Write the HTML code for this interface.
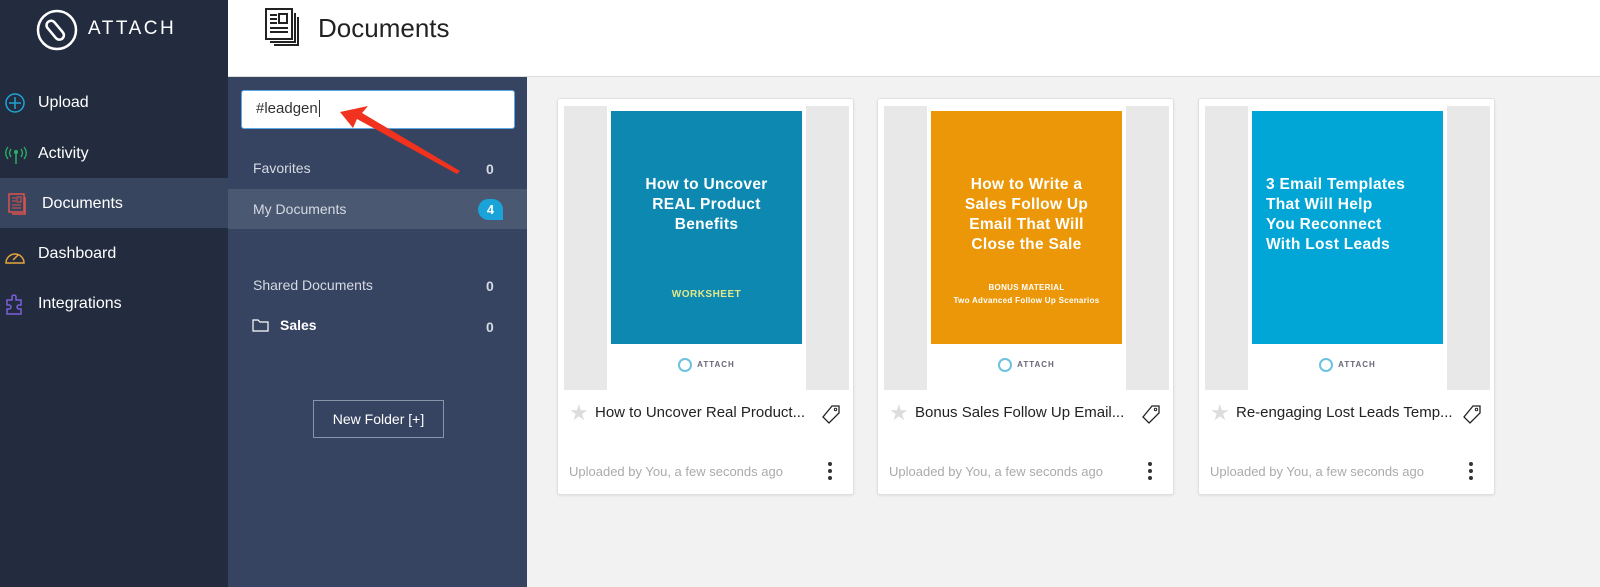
<!DOCTYPE html>
<html><head><meta charset="utf-8"><style>
*{margin:0;padding:0;box-sizing:border-box}
body{width:1600px;height:587px;overflow:hidden;font-family:"Liberation Sans",sans-serif;background:#f2f2f2;position:relative}
.a{position:absolute}
#side{left:0;top:0;width:228px;height:587px;background:#232c3f}
.nav{position:absolute;left:38px;color:#fff;font-size:16px}
#panel{left:228px;top:77px;width:299px;height:510px;background:#364461}
#head{left:228px;top:0;width:1372px;height:77px;background:#fff;border-bottom:1px solid #ddd}
.pl{position:absolute;left:25px;color:#d5dae3;font-size:14px}
.pc{position:absolute;left:258px;color:#d5dae3;font-size:14px;font-weight:bold}
.card{position:absolute;top:98px;width:297px;height:397px;background:#fff;border:1px solid #e0e0e0;border-radius:3px;box-shadow:0 1px 2px rgba(0,0,0,.08)}
.img{position:absolute;left:6px;top:7px;width:285px;height:284px;background:#e8e8e8}
.pg{position:absolute;left:43px;top:0;width:199px;height:284px;background:#fff}
.book{position:absolute;left:4px;top:5px;width:191px;height:233px;color:#fff;font-weight:bold;font-size:15.5px;text-align:center;line-height:20px;letter-spacing:.3px}
.logo{position:absolute;left:0;width:199px;top:252px;text-align:center;font-size:8px;font-weight:bold;color:#667;letter-spacing:1px}
.logo span{display:inline-block;width:14px;height:14px;border:2px solid #6cc2e0;border-radius:50%;vertical-align:middle;margin-right:5px}
.title{position:absolute;left:37px;top:305px;font-size:15px;color:#222}
.star{position:absolute;left:11px;top:301px;font-size:22px;color:#ddd}
.tag{position:absolute;left:262px;top:305px}
.up{position:absolute;left:11px;top:365px;font-size:13px;color:#aaa}
.dots{position:absolute;left:270px;top:363px;width:4px}
.dots i{display:block;width:4px;height:4px;border-radius:50%;background:#333;margin-bottom:3px}
</style></head><body>
<div class="a" id="side">
 <svg class="a" style="left:36px;top:9px" width="42" height="42" viewBox="0 0 42 42"><circle cx="21" cy="21" r="19" fill="none" stroke="#fff" stroke-width="2.5"/><rect x="15" y="9" width="9" height="22" rx="4.5" transform="rotate(-40 21 21)" fill="none" stroke="#fff" stroke-width="2.5"/></svg>
 <div class="a" style="left:88px;top:18px;color:#fff;font-size:19px;letter-spacing:2.5px">ATTACH</div>
 <div class="a" style="left:0;top:178px;width:228px;height:50px;background:#38455f"></div>
 <svg class="a" style="left:5px;top:93px" width="20" height="20"><circle cx="10" cy="10" r="9" fill="none" stroke="#1fa3d4" stroke-width="1.5"/><path d="M10 4v12M4 10h12" stroke="#1fa3d4" stroke-width="1.5"/></svg>
 <div class="nav" style="top:94px">Upload</div>
 <svg class="a" style="left:5px;top:144px" width="22" height="22"><path d="M3 3c-3 4-3 8 0 12M19 3c3 4 3 8 0 12M6 5c-2 3-2 5 0 8M16 5c2 3 2 5 0 8" stroke="#2ab26a" fill="none" stroke-width="1.3"/><circle cx="11" cy="8" r="2" fill="#2ab26a"/><path d="M11 9v11" stroke="#2ab26a" stroke-width="1.5"/></svg>
 <div class="nav" style="top:145px">Activity</div>
 <svg class="a" style="left:8px;top:193px" width="22" height="22"><rect x="1" y="1" width="15" height="18" fill="none" stroke="#d9534f" stroke-width="1.5"/><path d="M17 4v17H4" stroke="#d9534f" fill="none" stroke-width="1.5"/><path d="M4 5h4M4 8h4M4 12h9M4 15h9" stroke="#d9534f"/><rect x="9" y="4" width="4" height="5" fill="none" stroke="#d9534f"/></svg>
 <div class="nav" style="top:195px;left:42px">Documents</div>
 <svg class="a" style="left:4px;top:246px" width="22" height="20"><path d="M2 17a9 9 0 1 1 18 0z" fill="none" stroke="#e8a33a" stroke-width="1.5"/><path d="M9 14l5-5" stroke="#e8a33a" stroke-width="1.5"/></svg>
 <div class="nav" style="top:245px">Dashboard</div>
 <svg class="a" style="left:6px;top:294px" width="20" height="22"><path d="M1 6h5V3a2 2 0 0 1 4 0v3h5v5h-2a2 2 0 0 0 0 4h2v5H1v-5h2a2 2 0 0 0 0-4H1z" fill="none" stroke="#7b5fd6" stroke-width="1.5"/></svg>
 <div class="nav" style="top:295px">Integrations</div>
</div>
<div class="a" id="head">
 <svg class="a" style="left:36px;top:7px" width="38" height="40" viewBox="0 0 38 40"><rect x="2" y="2" width="26" height="30" fill="#fff" stroke="#222" stroke-width="2"/><path d="M31 6v29H6M34 10v28H10" stroke="#222" fill="none" stroke-width="2"/><path d="M6 8h7M6 12h7M6 16h7M6 21h18M6 25h18" stroke="#222" stroke-width="2"/><rect x="15" y="7" width="8" height="9" fill="none" stroke="#222" stroke-width="2"/></svg>
 <div class="a" style="left:90px;top:13px;font-size:26px;color:#222">Documents</div>
</div>
<div class="a" id="panel">
 <div class="a" style="left:13px;top:13px;width:274px;height:39px;background:#fff;border:1px solid #5aa9e6;border-radius:3px;font-size:15px;color:#333;padding:9px 14px">#leadgen<span style="border-left:1px solid #333;margin-left:1px"></span></div>
 <div class="pl" style="top:83px">Favorites</div><div class="pc" style="top:84px">0</div>
 <div class="a" style="left:0;top:112px;width:299px;height:40px;background:#4a5872"></div>
 <div class="pl" style="top:124px">My Documents</div>
 <div class="a" style="left:250px;top:122px;width:25px;height:21px;background:#19a3d8;border-radius:11px 11px 0 11px;color:#fff;font-weight:bold;font-size:13px;text-align:center;line-height:21px">4</div>
 <div class="pl" style="top:200px">Shared Documents</div><div class="pc" style="top:201px">0</div>
 <svg class="a" style="left:24px;top:242px" width="17" height="13"><path d="M1 1h5l2 2h8v9H1z" fill="none" stroke="#fff" stroke-width="1.2"/></svg>
 <div class="pl" style="left:52px;top:240px;color:#fff;font-weight:bold">Sales</div><div class="pc" style="top:242px">0</div>
 <div class="a" style="left:85px;top:323px;width:131px;height:38px;border:1px solid #8a94a8;color:#fff;font-size:14px;text-align:center;line-height:36px">New Folder [+]</div>
</div>
<svg class="a" style="left:330px;top:104px" width="135" height="70"><path d="M10 8l28-6-6 7 98 58-3 3-100-55-4 9z" fill="#f0321e"/></svg>

<div class="card" style="left:557px"><div class="img"><div class="pg"><div class="book" style="background:#0d88b0"><div style="margin-top:64px">How to Uncover<br>REAL Product<br>Benefits</div><div style="margin-top:50px;font-size:10px;color:#e2e88a;letter-spacing:.5px">WORKSHEET</div></div><div class="logo"><span></span>ATTACH</div></div></div>
<div class="star">★</div><div class="title">How to Uncover Real Product...</div>
<svg class="tag" width="22" height="22"><path d="M12 2h7v7L9 19 3 13z" fill="none" stroke="#222" stroke-width="1.3"/><circle cx="15.5" cy="5.5" r="1.2" fill="none" stroke="#222"/></svg>
<div class="up">Uploaded by You, a few seconds ago</div><div class="dots"><i></i><i></i><i></i></div></div>

<div class="card" style="left:877px"><div class="img"><div class="pg"><div class="book" style="background:#eb9708"><div style="margin-top:64px">How to Write a<br>Sales Follow Up<br>Email That Will<br>Close the Sale</div><div style="margin-top:26px;font-size:8px;line-height:13px">BONUS MATERIAL<br>Two Advanced Follow Up Scenarios</div></div><div class="logo"><span></span>ATTACH</div></div></div>
<div class="star">★</div><div class="title">Bonus Sales Follow Up Email...</div>
<svg class="tag" width="22" height="22"><path d="M12 2h7v7L9 19 3 13z" fill="none" stroke="#222" stroke-width="1.3"/><circle cx="15.5" cy="5.5" r="1.2" fill="none" stroke="#222"/></svg>
<div class="up">Uploaded by You, a few seconds ago</div><div class="dots"><i></i><i></i><i></i></div></div>

<div class="card" style="left:1198px"><div class="img"><div class="pg"><div class="book" style="background:#02a6d6;text-align:left;padding-left:14px"><div style="margin-top:64px">3 Email Templates<br>That Will Help<br>You Reconnect<br>With Lost Leads</div></div><div class="logo"><span></span>ATTACH</div></div></div>
<div class="star">★</div><div class="title">Re-engaging Lost Leads Temp...</div>
<svg class="tag" width="22" height="22"><path d="M12 2h7v7L9 19 3 13z" fill="none" stroke="#222" stroke-width="1.3"/><circle cx="15.5" cy="5.5" r="1.2" fill="none" stroke="#222"/></svg>
<div class="up">Uploaded by You, a few seconds ago</div><div class="dots"><i></i><i></i><i></i></div></div>
</body></html>
